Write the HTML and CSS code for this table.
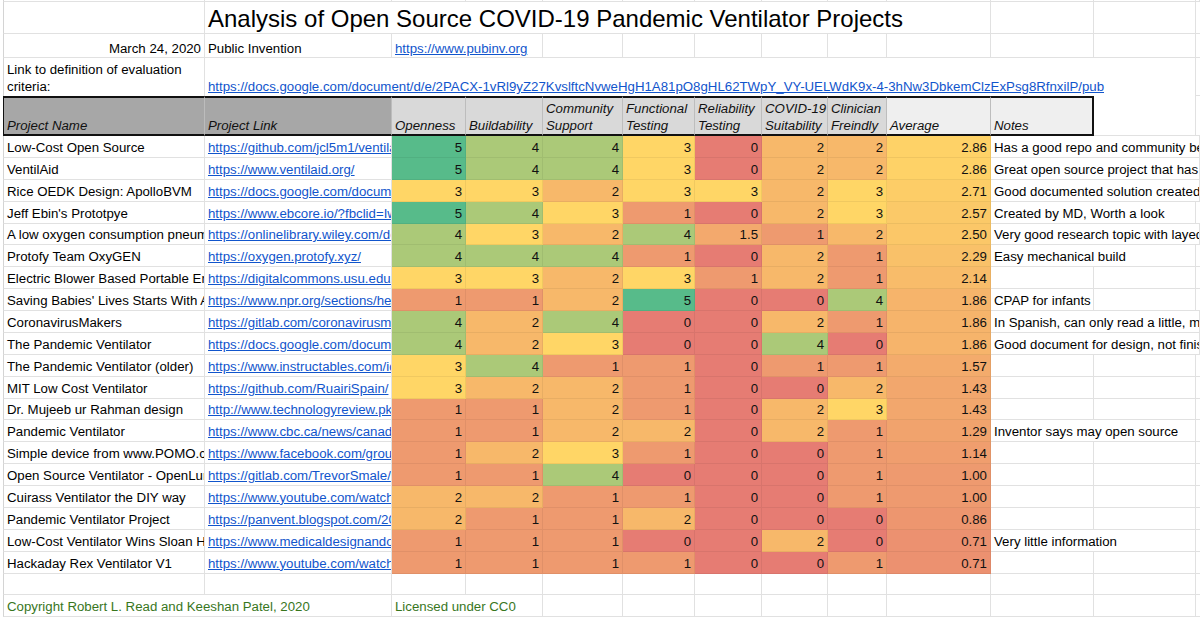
FILE: index.html
```html
<!DOCTYPE html>
<html>
<head>
<meta charset="utf-8">
<title>Analysis of Open Source COVID-19 Pandemic Ventilator Projects</title>
<link rel="stylesheet" href="styles.css">
</head>
<body>
<div class="sheet">
  <div class="row stub">
    <div class="c"></div><div class="c"></div><div class="c"></div><div class="c"></div><div class="c"></div><div class="c"></div><div class="c"></div><div class="c"></div><div class="c"></div><div class="c"></div><div class="c"></div><div class="c"></div><div class="c"></div>
  </div>
  <div class="row title">
    <div class="c"></div>
    <div class="c sp9 title-text">Analysis of Open Source COVID-19 Pandemic Ventilator Projects</div>
    <div class="c"></div><div class="c"></div><div class="c"></div>
  </div>
  <div class="row meta">
    <div class="c n">March 24, 2020</div>
    <div class="c">Public Invention</div>
    <div class="c sp2"><span class="lnk">https://www.pubinv.org</span></div>
    <div class="c"></div><div class="c"></div><div class="c"></div><div class="c"></div><div class="c"></div><div class="c"></div><div class="c"></div><div class="c"></div><div class="c"></div>
  </div>
  <div class="row crit">
    <div class="c wrap">Link to definition of evaluation<br>criteria:</div>
    <div class="c sp11"><span class="lnk">https://docs.google.com/document/d/e/2PACX-1vRl9yZ27KvslftcNvweHgH1A81pO8gHL62TWpY_VY-UELWdK9x-4-3hNw3DbkemClzExPsg8RfnxilP/pub</span></div>
    <div class="c last"></div>
  </div>
  <div class="row head">
    <div class="c h dark first">Project Name</div>
    <div class="c h dark">Project Link</div>
    <div class="c h">Openness</div>
    <div class="c h">Buildability</div>
    <div class="c h">Community<br>Support</div>
    <div class="c h">Functional<br>Testing</div>
    <div class="c h">Reliability<br>Testing</div>
    <div class="c h">COVID-19<br>Suitability</div>
    <div class="c h">Clinician<br>Freindly</div>
    <div class="c h pale">Average</div>
    <div class="c h pale end">Notes</div>
    <div class="c"></div><div class="c"></div>
  </div>

  <div class="row data">
    <div class="c">Low-Cost Open Source</div>
    <div class="c"><span class="lnk">https://github.com/jcl5m1/ventilator</span></div>
    <div class="c n s5">5</div><div class="c n s4">4</div><div class="c n s4">4</div><div class="c n s3">3</div><div class="c n s0">0</div><div class="c n s2">2</div><div class="c n s2">2</div>
    <div class="c n sc" style="background:#fed267">2.86</div>
    <div class="c sp3">Has a good repo and community behind it already</div>
  </div>
  <div class="row data">
    <div class="c">VentilAid</div>
    <div class="c"><span class="lnk">https://www.ventilaid.org/</span></div>
    <div class="c n s5">5</div><div class="c n s4">4</div><div class="c n s4">4</div><div class="c n s3">3</div><div class="c n s0">0</div><div class="c n s2">2</div><div class="c n s2">2</div>
    <div class="c n sc" style="background:#fed267">2.86</div>
    <div class="c sp3">Great open source project that has a strong team</div>
  </div>
  <div class="row data">
    <div class="c">Rice OEDK Design: ApolloBVM</div>
    <div class="c"><span class="lnk">https://docs.google.com/document/d/1RZ5KvJ</span></div>
    <div class="c n s3">3</div><div class="c n s3">3</div><div class="c n s2">2</div><div class="c n s3">3</div><div class="c n s3">3</div><div class="c n s2">2</div><div class="c n s3">3</div>
    <div class="c n sc" style="background:#fdcd67">2.71</div>
    <div class="c sp3">Good documented solution created by students</div>
  </div>
  <div class="row data">
    <div class="c">Jeff Ebin's Prototpye</div>
    <div class="c"><span class="lnk">https://www.ebcore.io/?fbclid=IwAR2n</span></div>
    <div class="c n s5">5</div><div class="c n s4">4</div><div class="c n s3">3</div><div class="c n s1">1</div><div class="c n s0">0</div><div class="c n s2">2</div><div class="c n s3">3</div>
    <div class="c n sc" style="background:#fbc968">2.57</div>
    <div class="c sp2">Created by MD, Worth a look</div><div class="c"></div>
  </div>
  <div class="row data">
    <div class="c">A low oxygen consumption pneumatic ventilator</div>
    <div class="c"><span class="lnk">https://onlinelibrary.wiley.com/doi/</span></div>
    <div class="c n s4">4</div><div class="c n s3">3</div><div class="c n s2">2</div><div class="c n s4">4</div><div class="c n s15">1.5</div><div class="c n s1">1</div><div class="c n s2">2</div>
    <div class="c n sc" style="background:#fbc768">2.50</div>
    <div class="c sp3">Very good research topic with layed out design</div>
  </div>
  <div class="row data">
    <div class="c">Protofy Team OxyGEN</div>
    <div class="c"><span class="lnk">https://oxygen.protofy.xyz/</span></div>
    <div class="c n s4">4</div><div class="c n s4">4</div><div class="c n s4">4</div><div class="c n s1">1</div><div class="c n s0">0</div><div class="c n s2">2</div><div class="c n s1">1</div>
    <div class="c n sc" style="background:#f9c169">2.29</div>
    <div class="c sp2">Easy mechanical build</div><div class="c"></div>
  </div>
  <div class="row data">
    <div class="c">Electric Blower Based Portable Emergency Ventilator</div>
    <div class="c"><span class="lnk">https://digitalcommons.usu.edu/</span></div>
    <div class="c n s3">3</div><div class="c n s3">3</div><div class="c n s2">2</div><div class="c n s3">3</div><div class="c n s1">1</div><div class="c n s2">2</div><div class="c n s1">1</div>
    <div class="c n sc" style="background:#f8bc6a">2.14</div>
    <div class="c"></div><div class="c"></div><div class="c"></div>
  </div>
  <div class="row data">
    <div class="c">Saving Babies' Lives Starts With A Bubble</div>
    <div class="c"><span class="lnk">https://www.npr.org/sections/health</span></div>
    <div class="c n s1">1</div><div class="c n s1">1</div><div class="c n s2">2</div><div class="c n s5">5</div><div class="c n s0">0</div><div class="c n s0">0</div><div class="c n s4">4</div>
    <div class="c n sc" style="background:#f6b46b">1.86</div>
    <div class="c">CPAP for infants</div><div class="c"></div><div class="c"></div>
  </div>
  <div class="row data">
    <div class="c">CoronavirusMakers</div>
    <div class="c"><span class="lnk">https://gitlab.com/coronavirusmakers</span></div>
    <div class="c n s4">4</div><div class="c n s2">2</div><div class="c n s4">4</div><div class="c n s0">0</div><div class="c n s0">0</div><div class="c n s2">2</div><div class="c n s1">1</div>
    <div class="c n sc" style="background:#f6b46b">1.86</div>
    <div class="c sp3">In Spanish, can only read a little, more to come</div>
  </div>
  <div class="row data">
    <div class="c">The Pandemic Ventilator</div>
    <div class="c"><span class="lnk">https://docs.google.com/document/d/</span></div>
    <div class="c n s4">4</div><div class="c n s2">2</div><div class="c n s3">3</div><div class="c n s0">0</div><div class="c n s0">0</div><div class="c n s4">4</div><div class="c n s0">0</div>
    <div class="c n sc" style="background:#f6b46b">1.86</div>
    <div class="c sp3">Good document for design, not finished yet</div>
  </div>
  <div class="row data">
    <div class="c">The Pandemic Ventilator (older)</div>
    <div class="c"><span class="lnk">https://www.instructables.com/id/</span></div>
    <div class="c n s3">3</div><div class="c n s4">4</div><div class="c n s1">1</div><div class="c n s1">1</div><div class="c n s0">0</div><div class="c n s1">1</div><div class="c n s1">1</div>
    <div class="c n sc" style="background:#f3ab6c">1.57</div>
    <div class="c"></div><div class="c"></div><div class="c"></div>
  </div>
  <div class="row data">
    <div class="c">MIT Low Cost Ventilator</div>
    <div class="c"><span class="lnk">https://github.com/RuairiSpain/</span></div>
    <div class="c n s3">3</div><div class="c n s2">2</div><div class="c n s2">2</div><div class="c n s1">1</div><div class="c n s0">0</div><div class="c n s0">0</div><div class="c n s2">2</div>
    <div class="c n sc" style="background:#f2a76d">1.43</div>
    <div class="c"></div><div class="c"></div><div class="c"></div>
  </div>
  <div class="row data">
    <div class="c">Dr. Mujeeb ur Rahman design</div>
    <div class="c"><span class="lnk">http://www.technologyreview.pk/</span></div>
    <div class="c n s1">1</div><div class="c n s1">1</div><div class="c n s2">2</div><div class="c n s1">1</div><div class="c n s0">0</div><div class="c n s2">2</div><div class="c n s3">3</div>
    <div class="c n sc" style="background:#f2a76d">1.43</div>
    <div class="c"></div><div class="c"></div><div class="c"></div>
  </div>
  <div class="row data">
    <div class="c">Pandemic Ventilator</div>
    <div class="c"><span class="lnk">https://www.cbc.ca/news/canada/</span></div>
    <div class="c n s1">1</div><div class="c n s1">1</div><div class="c n s2">2</div><div class="c n s2">2</div><div class="c n s0">0</div><div class="c n s2">2</div><div class="c n s1">1</div>
    <div class="c n sc" style="background:#f1a36d">1.29</div>
    <div class="c sp2">Inventor says may open source</div><div class="c"></div>
  </div>
  <div class="row data">
    <div class="c">Simple device from www.POMO.co</div>
    <div class="c"><span class="lnk">https://www.facebook.com/groups/</span></div>
    <div class="c n s1">1</div><div class="c n s2">2</div><div class="c n s3">3</div><div class="c n s1">1</div><div class="c n s0">0</div><div class="c n s0">0</div><div class="c n s1">1</div>
    <div class="c n sc" style="background:#f09e6e">1.14</div>
    <div class="c"></div><div class="c"></div><div class="c"></div>
  </div>
  <div class="row data">
    <div class="c">Open Source Ventilator - OpenLung</div>
    <div class="c"><span class="lnk">https://gitlab.com/TrevorSmale/</span></div>
    <div class="c n s1">1</div><div class="c n s1">1</div><div class="c n s4">4</div><div class="c n s0">0</div><div class="c n s0">0</div><div class="c n s0">0</div><div class="c n s1">1</div>
    <div class="c n sc" style="background:#ee9a6f">1.00</div>
    <div class="c"></div><div class="c"></div><div class="c"></div>
  </div>
  <div class="row data">
    <div class="c">Cuirass Ventilator the DIY way</div>
    <div class="c"><span class="lnk">https://www.youtube.com/watch?v=</span></div>
    <div class="c n s2">2</div><div class="c n s2">2</div><div class="c n s1">1</div><div class="c n s1">1</div><div class="c n s0">0</div><div class="c n s0">0</div><div class="c n s1">1</div>
    <div class="c n sc" style="background:#ee9a6f">1.00</div>
    <div class="c"></div><div class="c"></div><div class="c"></div>
  </div>
  <div class="row data">
    <div class="c">Pandemic Ventilator Project</div>
    <div class="c"><span class="lnk">https://panvent.blogspot.com/2020/</span></div>
    <div class="c n s2">2</div><div class="c n s1">1</div><div class="c n s1">1</div><div class="c n s2">2</div><div class="c n s0">0</div><div class="c n s0">0</div><div class="c n s0">0</div>
    <div class="c n sc" style="background:#ed966f">0.86</div>
    <div class="c"></div><div class="c"></div><div class="c"></div>
  </div>
  <div class="row data">
    <div class="c">Low-Cost Ventilator Wins Sloan Health</div>
    <div class="c"><span class="lnk">https://www.medicaldesignandoutsourcing.com/</span></div>
    <div class="c n s1">1</div><div class="c n s1">1</div><div class="c n s1">1</div><div class="c n s0">0</div><div class="c n s0">0</div><div class="c n s2">2</div><div class="c n s0">0</div>
    <div class="c n sc" style="background:#ec9170">0.71</div>
    <div class="c sp2">Very little information</div><div class="c"></div>
  </div>
  <div class="row data">
    <div class="c">Hackaday Rex Ventilator V1</div>
    <div class="c"><span class="lnk">https://www.youtube.com/watch?v=</span></div>
    <div class="c n s1">1</div><div class="c n s1">1</div><div class="c n s1">1</div><div class="c n s1">1</div><div class="c n s0">0</div><div class="c n s0">0</div><div class="c n s1">1</div>
    <div class="c n sc" style="background:#ec9170">0.71</div>
    <div class="c"></div><div class="c"></div><div class="c"></div>
  </div>

  <div class="row data">
    <div class="c"></div><div class="c"></div><div class="c"></div><div class="c"></div><div class="c"></div><div class="c"></div><div class="c"></div><div class="c"></div><div class="c"></div><div class="c"></div><div class="c"></div><div class="c"></div><div class="c"></div>
  </div>
  <div class="row data foot">
    <div class="c sp2 green">Copyright Robert L. Read and Keeshan Patel, 2020</div>
    <div class="c sp2 green">Licensed under CC0</div>
    <div class="c"></div><div class="c"></div><div class="c"></div><div class="c"></div><div class="c"></div><div class="c"></div><div class="c"></div><div class="c"></div><div class="c"></div>
  </div>
</div>
</body>
</html>
```

FILE: styles.css
```css
* { box-sizing: border-box; }

html, body {
  margin: 0;
  padding: 0;
  background: #ffffff;
  overflow: hidden;
}

body {
  font-family: "Liberation Sans", Arial, Helvetica, sans-serif;
  font-size: 13.25px;
  color: #000000;
}

.sheet {
  margin-left: 3px;
  width: 1197px;
  display: flex;
  flex-direction: column;
}

.row {
  display: grid;
  grid-template-columns: 202px 187px 74px 77px 80px 72px 67px 66px 59px 104px 103px 102px 1fr;
}

.c {
  min-width: 0;
  display: flex;
  align-items: flex-end;
  overflow: hidden;
  white-space: nowrap;
  padding: 0 3px 1px;
  line-height: 16px;
  border-right: 1px solid #e1e1e1;
  border-bottom: 1px solid #e1e1e1;
}

.row > .c:first-child { border-left: 1px solid #d4d4d4; }

.n { justify-content: flex-end; }

.sp2 { grid-column: span 2; }
.sp3 { grid-column: span 3; }
.sp9 { grid-column: span 9; }
.sp11 { grid-column: span 11; }

.lnk {
  color: #1155cc;
  text-decoration: underline;
}

.green { color: #38761d; }

/* row heights */
.stub { height: 2px; }
.stub .c { padding: 0; }

.title { height: 32px; }
.title-text {
  font-size: 24px;
  line-height: 28px;
  padding: 0 3px;
}

.meta { height: 24px; }
.meta .c { padding-bottom: 0; }

.crit { height: 38px; }
.crit .c {
  border-bottom: 0;
  line-height: 17px;
  padding-bottom: 1px;
}
.crit .c.last { border-bottom: 1px solid #e1e1e1; }
.crit .wrap { white-space: normal; }

.head { height: 40px; }
.head .h {
  font-style: italic;
  line-height: 17px;
  padding-bottom: 0;
  background: #d9d9d9;
  border-top: 2px solid #111111;
  border-bottom: 2px solid #111111;
  border-right: 1px solid #bdbdbd;
  color: #111111;
}
.head .h.dark { background: #a7a7a7; border-right-color: #bcbcbc; }
.head .h.pale { background: #efefef; }
.head .h.first { border-left: 1px solid #111111; }
.head .h.end { border-right: 2px solid #111111; }

.data { height: 21.875px; }
.data .c { padding-bottom: 1px; }
.foot .c { padding-bottom: 1px; }

/* colour scale: 0 red -> 3 yellow -> 5 green */
.s0, .s1, .s15, .s2, .s3, .s4, .s5, .sc {
  border-right-color: rgba(0, 0, 0, 0.06);
  border-bottom-color: rgba(0, 0, 0, 0.06);
  color: #111111;
}
.s0 { background: #e67c73; }
.s1 { background: #ee9a6f; }
.s15 { background: #f3a96d; }
.s2 { background: #f7b86a; }
.s3 { background: #ffd666; }
.s4 { background: #abc978; }
.s5 { background: #57bb8a; }
```
